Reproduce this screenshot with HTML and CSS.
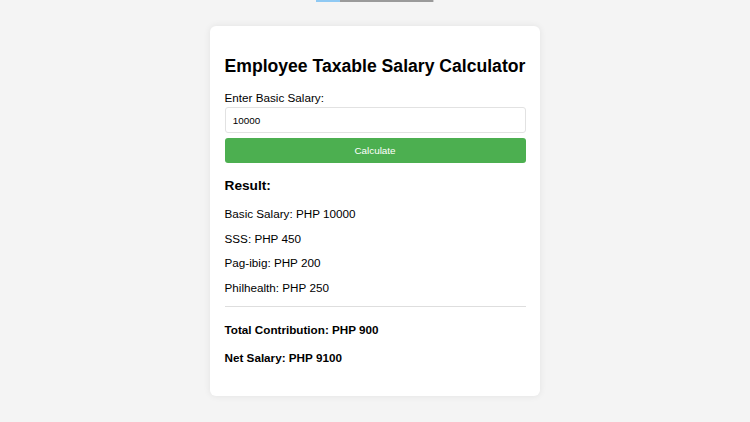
FILE: index.html
```html
<!DOCTYPE html>
<html lang="en">
<head>
<meta charset="utf-8">
<title>Employee Taxable Salary Calculator</title>
<link rel="stylesheet" href="styles.css">
</head>
<body>
<div class="topbar"></div>
<div class="card">
  <h2 class="title">Employee Taxable Salary Calculator</h2>
  <label class="label" for="salary">Enter Basic Salary:</label>
  <input class="input" id="salary" type="text" value="10000">
  <button class="btn" type="button">Calculate</button>
  <div class="result">
    <h3 class="result-title">Result:</h3>
    <p class="line">Basic Salary: PHP 10000</p>
    <p class="line">SSS: PHP 450</p>
    <p class="line">Pag-ibig: PHP 200</p>
    <p class="line">Philhealth: PHP 250</p>
    <hr class="divider">
    <h4 class="total">Total Contribution: PHP 900</h4>
    <h4 class="total last">Net Salary: PHP 9100</h4>
  </div>
</div>
</body>
</html>
```
FILE: styles.css
```css
html, body {
  margin: 0;
  padding: 0;
}
body {
  background: #f4f4f4;
  font-family: "Liberation Sans", Arial, sans-serif;
  color: #000;
  display: flex;
  flex-direction: column;
  align-items: center;
  min-height: 422px;
}
.topbar {
  width: 118px;
  height: 1.5px;
  background: linear-gradient(to right, #8fc9f3 0, #8fc9f3 24px, #9a9a9a 24px, #9a9a9a 117px, #cfcfcf 117px);
}
.card {
  margin-top: 24.5px;
  width: 301px;
  padding: 14.6px;
  background: #fff;
  border-radius: 6px;
  box-shadow: 0 0 7px rgba(0, 0, 0, 0.08);
}
.title {
  font-size: 17.6px;
  font-weight: bold;
  margin: 15px 0 14.6px;
  white-space: nowrap;
}
.label {
  display: block;
  font-size: 11.7px;
}
.input {
  display: block;
  box-sizing: border-box;
  width: 301px;
  height: 26.5px;
  margin: 2.6px 0 0;
  padding: 0 7.3px;
  border: 1px solid #e2e2e2;
  border-radius: 3px;
  font-family: "Liberation Sans", Arial, sans-serif;
  font-size: 9.9px;
  color: #000;
  background: #fff;
  outline: none;
}
.btn {
  display: block;
  width: 301px;
  height: 25.5px;
  margin-top: 4.5px;
  padding: 0;
  border: none;
  border-radius: 3px;
  background: #4caf50;
  color: #fff;
  font-family: "Liberation Sans", Arial, sans-serif;
  font-size: 9.9px;
}
.result-title {
  font-size: 13.7px;
  font-weight: bold;
  margin: 14.9px 0 13.7px;
}
.line {
  font-size: 11.7px;
  margin: 11.7px 0;
}
.divider {
  border: none;
  height: 1.5px;
  background: #dedede;
  margin: 11.7px 0 0;
}
.total {
  font-size: 11.7px;
  font-weight: bold;
  margin: 15.6px 0;
}
.total.last {
  margin-bottom: 17.6px;
}
```
